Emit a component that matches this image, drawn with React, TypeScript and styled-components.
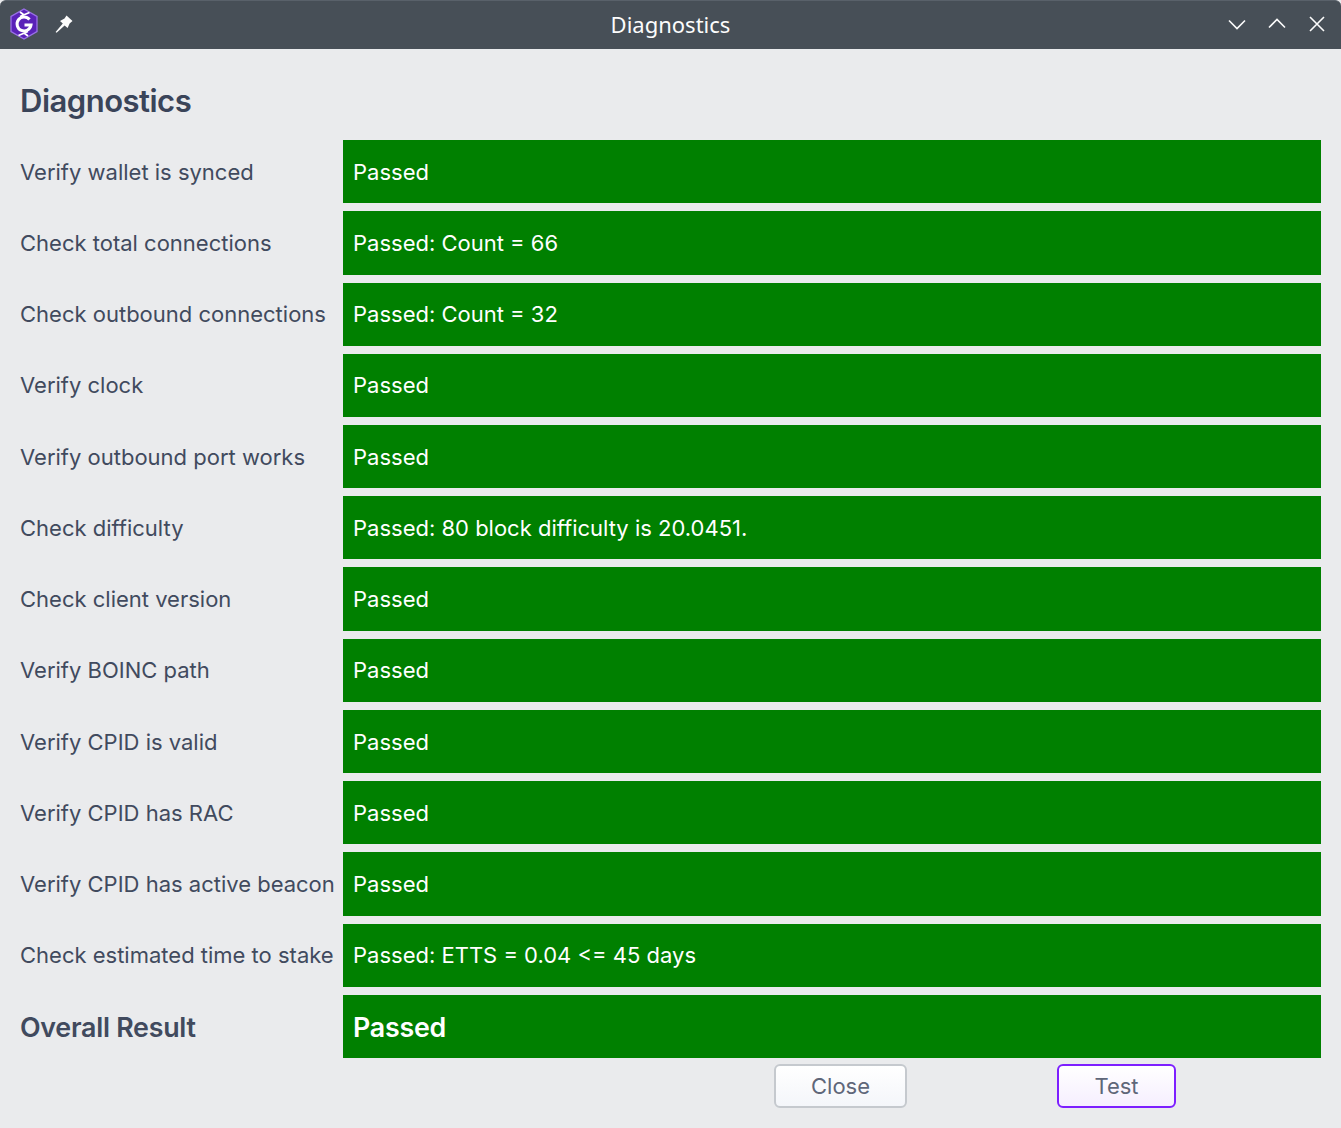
import React from 'react'
import styled, { createGlobalStyle } from 'styled-components'

const GlobalStyle = createGlobalStyle`
  html, body {
    margin: 0;
    padding: 0;
    background: #eaebed;
  }
`

const Window = styled.div`
  display: flex;
  flex-direction: column;
  width: 1341px;
  height: 1128px;
  background: #eaebed;
  overflow: hidden;
  font-family: Inter, "Liberation Sans", sans-serif;
`

const TitleBar = styled.header`
  position: relative;
  display: flex;
  align-items: center;
  justify-content: space-between;
  flex: none;
  height: 49px;
  padding: 0 12px 3px 9px;
  box-sizing: border-box;
  background: #474f57;
  border-top: 1px solid #59616a;
  border-radius: 6px 6px 0 0;
  color: #fcfcfc;
`

const TitleText = styled.span`
  position: absolute;
  left: 0;
  right: 0;
  text-align: center;
  font-family: "Noto Sans", sans-serif;
  font-size: 22px;
  pointer-events: none;
`

const ButtonGroup = styled.div`
  display: flex;
  align-items: center;
  gap: 16px;
`

const WindowButtons = styled(ButtonGroup)`
  gap: 16px;
`

const WindowButton = styled.span`
  display: flex;
  width: 24px;
  height: 24px;
`

const Content = styled.main`
  display: flex;
  flex-direction: column;
  flex: 1;
  padding: 31px 20px 0 20px;
`

const Heading = styled.h1`
  margin: 0 0 19.05px;
  font-size: 31px;
  line-height: 41px;
  font-weight: 600;
  letter-spacing: -0.5px;
  color: #3a4459;
`

const ResultGrid = styled.div`
  display: grid;
  grid-template-columns: 323px 1fr;
  grid-auto-rows: 63.24px;
  row-gap: 8px;
`

const Label = styled.div<{ $overall?: boolean }>`
  display: flex;
  align-items: center;
  padding-top: ${p => (p.$overall ? '1px' : '0')};
  font-size: ${p => (p.$overall ? '26.8px' : '22px')};
  font-weight: ${p => (p.$overall ? 600 : 400)};
  letter-spacing: ${p => (p.$overall ? '-0.25px' : '0')};
  color: #414a5e;
  white-space: nowrap;
`

const Result = styled.div<{ $overall?: boolean }>`
  display: flex;
  align-items: center;
  padding: ${p => (p.$overall ? '1px' : '0')} 0 0 10px;
  background: #008000;
  color: #fff;
  font-size: ${p => (p.$overall ? '26.8px' : '22px')};
  font-weight: ${p => (p.$overall ? 600 : 400)};
  letter-spacing: ${p => (p.$overall ? '-0.25px' : '0')};
  white-space: nowrap;
`

const Footer = styled.footer`
  display: grid;
  grid-template-columns: 133px 119px;
  column-gap: 150px;
  justify-content: start;
  margin: 6px 0 0 754px;
`

const Button = styled.button<{ $focused?: boolean }>`
  height: 44px;
  padding: 0;
  border: 2px solid ${p => (p.$focused ? '#7d1fff' : '#c5c9ce')};
  border-radius: 6px;
  background: linear-gradient(${p => (p.$focused ? '#ffffff, #f6efff' : '#ffffff, #f4f6fa')});
  font-family: inherit;
  font-size: 22px;
  color: #5f6779;
`

const PinIcon = () => (
  <svg width="18" height="18" viewBox="0 0 18 18" fill="#fcfcfc">
    <path d="M11.5.5 17.5 6 14.6 8.4 12.6 13 9.6 10.4 1.6 17.8.6 17 7.8 8.6 5 6 9.5 3.6Z" />
  </svg>
)

const Logo = () => (
  <svg width="30" height="32" viewBox="0 0 30 32">
    <path d="M15 1 28 8.5V23.5L15 31 2 23.5V8.5Z" fill="#5a22b8" stroke="#9a70e8" strokeWidth="1.3" />
    <path d="M20.5 11.5A7 7 0 1 0 22 17H15.5" fill="none" stroke="#fff" strokeWidth="3" />
    <path d="M20.5 4.5 11 8.5M11 4l4 3M9.5 27.5 19 23.5M19 28l-4-3" fill="none" stroke="#fff" strokeWidth="1.8" />
  </svg>
)

const ChevronDown = () => (
  <svg width="24" height="24" viewBox="0 0 24 24" fill="none" stroke="#fcfcfc" strokeWidth="1.6">
    <path d="M4 8.5 12 16.5 20 8.5" />
  </svg>
)

const ChevronUp = () => (
  <svg width="24" height="24" viewBox="0 0 24 24" fill="none" stroke="#fcfcfc" strokeWidth="1.6">
    <path d="M4 15.5 12 7.5 20 15.5" />
  </svg>
)

const CloseIcon = () => (
  <svg width="24" height="24" viewBox="0 0 24 24" fill="none" stroke="#fcfcfc" strokeWidth="1.6">
    <path d="M5 5 19 19M19 5 5 19" />
  </svg>
)

const checks = [
  ['Verify wallet is synced', 'Passed'],
  ['Check total connections', 'Passed: Count = 66'],
  ['Check outbound connections', 'Passed: Count = 32'],
  ['Verify clock', 'Passed'],
  ['Verify outbound port works', 'Passed'],
  ['Check difficulty', 'Passed: 80 block difficulty is 20.0451.'],
  ['Check client version', 'Passed'],
  ['Verify BOINC path', 'Passed'],
  ['Verify CPID is valid', 'Passed'],
  ['Verify CPID has RAC', 'Passed'],
  ['Verify CPID has active beacon', 'Passed'],
  ['Check estimated time to stake', 'Passed: ETTS = 0.04 <= 45 days'],
]

const App = () => (
  <Window>
    <GlobalStyle />
    <TitleBar>
      <TitleText>Diagnostics</TitleText>
      <ButtonGroup>
        <Logo />
        <PinIcon />
      </ButtonGroup>
      <WindowButtons>
        <WindowButton><ChevronDown /></WindowButton>
        <WindowButton><ChevronUp /></WindowButton>
        <WindowButton><CloseIcon /></WindowButton>
      </WindowButtons>
    </TitleBar>
    <Content>
      <Heading>Diagnostics</Heading>
      <ResultGrid>
        {checks.map(([label, result]) => (
          <React.Fragment key={label}>
            <Label>{label}</Label>
            <Result>{result}</Result>
          </React.Fragment>
        ))}
        <Label $overall>Overall Result</Label>
        <Result $overall>Passed</Result>
      </ResultGrid>
      <Footer>
        <Button>Close</Button>
        <Button $focused>Test</Button>
      </Footer>
    </Content>
  </Window>
)

export default App
